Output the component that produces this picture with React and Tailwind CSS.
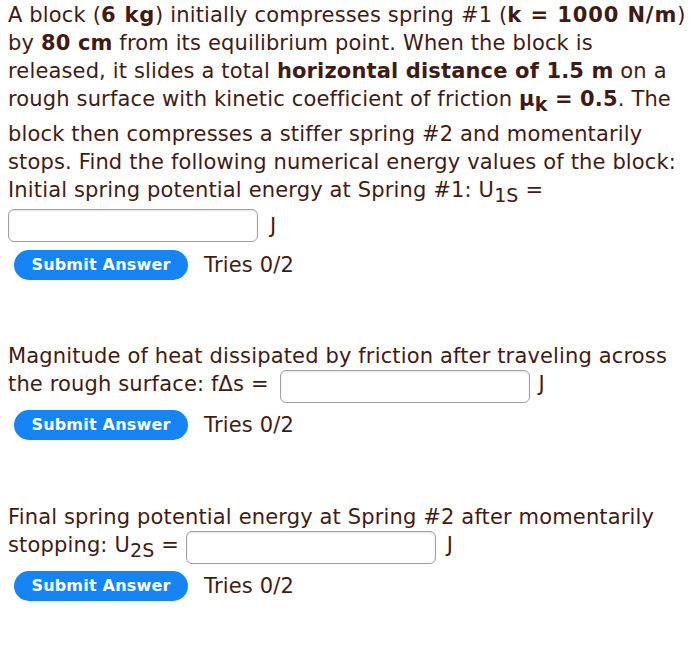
function Sub({ children }) {
  return (
    <sub className="text-[19px] leading-none relative top-[5px] align-baseline">
      {children}
    </sub>
  );
}

function Submit({ gap = "mt-[8px]" }) {
  return (
    <div className={gap + " ml-[6px] flex items-center gap-[16px]"}>
      <button className="rounded-full bg-[#1784f6] text-white font-bold text-[16px] tracking-[0.2px] h-[30px] w-[174px] flex items-center justify-center">
        Submit Answer
      </button>
      <span>Tries 0/2</span>
    </div>
  );
}

const input =
  "h-[33px] w-[250px] shrink-0 rounded-[6px] border border-[#a0a0a0] bg-white shadow-[inset_0_1px_2px_rgba(0,0,0,0.12)]";

export default function App() {
  return (
    <div
      className="min-h-screen bg-white px-[8px] pt-[1px] text-[21px] tracking-[0.15px] leading-[28px] text-[#3f1b14] whitespace-nowrap"
      style={{ fontFamily: '"DejaVu Sans", Verdana, sans-serif' }}
    >
      <div>
        A block (<b className="tracking-[0.8px]">6 kg</b>) initially compresses spring #1 (
        <b className="tracking-[0.9px]">k = 1000 N/m</b>)
      </div>
      <div>
        by <b>80 cm</b> from its equilibrium point. When the block is
      </div>
      <div>
        released, it slides a total <b>horizontal distance of 1.5 m</b> on a
      </div>
      <div className="pb-[7px]">
        rough surface with kinetic coefficient of friction{" "}
        <b>
          μ<Sub>k</Sub> = 0.5
        </b>
        . The
      </div>
      <div>block then compresses a stiffer spring #2 and momentarily</div>
      <div>stops. Find the following numerical energy values of the block:</div>
      <div>
        Initial spring potential energy at Spring #1: U<Sub>1S</Sub> =
      </div>
      <div className="mt-[5px] flex items-center gap-[12px]">
        <div className={input}></div>
        <span>J</span>
      </div>
      <Submit />

      <div className="mt-[62px]">
        <div>Magnitude of heat dissipated by friction after traveling across</div>
        <div className="flex items-center h-[28px]">
          <span>the rough surface: fΔs =&nbsp;</span>
          <div className={input + " ml-[4px] relative top-[2px]"}></div>
          <span className="ml-[9px]">J</span>
        </div>
      </div>
      <Submit gap="mt-[12px]" />

      <div className="mt-[63px]">
        <div>Final spring potential energy at Spring #2 after momentarily</div>
        <div className="flex items-center h-[28px]">
          <span>
            stopping: U<Sub>2S</Sub> =&nbsp;
          </span>
          <div className={input + " relative top-[2px]"}></div>
          <span className="ml-[11px]">J</span>
        </div>
      </div>
      <Submit gap="mt-[12px]" />
    </div>
  );
}
